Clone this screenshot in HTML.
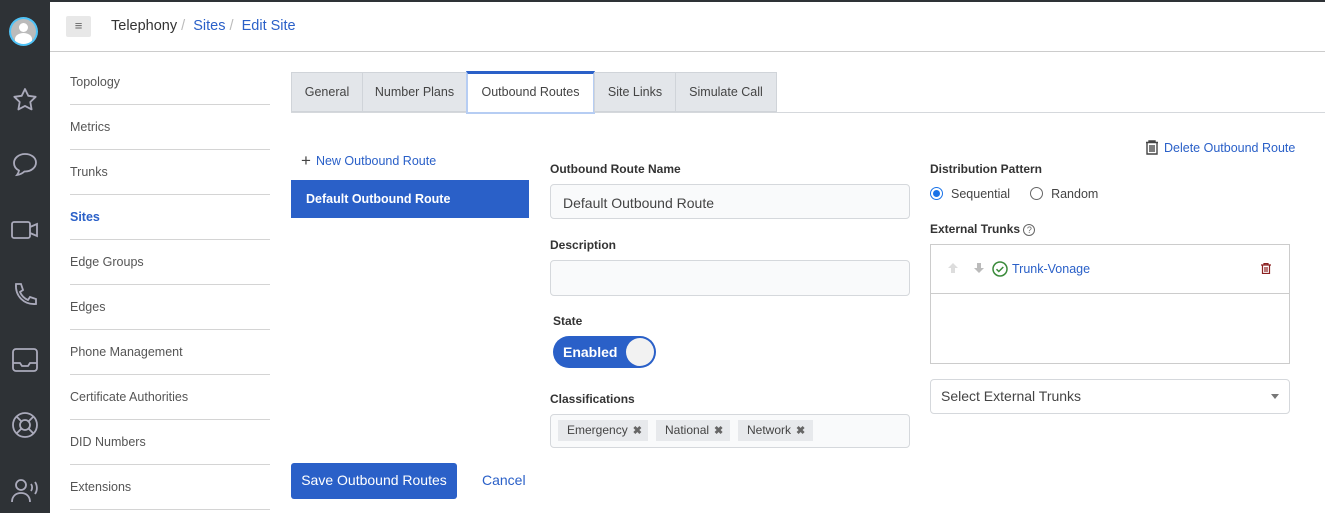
<!DOCTYPE html>
<html><head><meta charset="utf-8"><style>
*{box-sizing:border-box;margin:0;padding:0}
body{width:1325px;height:513px;overflow:hidden;background:#fff;font-family:"Liberation Sans",Arial,sans-serif;color:#333;position:relative}
.a{position:absolute}
.side{left:0;top:0;width:50px;height:513px;background:#2e3236}
.ico{position:absolute;left:10px;width:30px;height:30px}
.menu div{position:absolute;left:70px;width:200px;height:45px;border-bottom:1px solid #d4d4d4;font-size:12.5px;color:#555;padding-top:15px}
.tab{position:absolute;top:72px;height:40px;background:#e3e6ea;border:1px solid #d0d4d9;font-size:12.5px;color:#444;text-align:center;line-height:38px}
.lbl{font-size:12px;font-weight:bold;color:#333}
.inp{border:1px solid #d5d8dc;border-radius:4px;background:#f9fafb}
.tag{position:absolute;top:420px;height:21px;background:#e7e9ec;font-size:12px;color:#444;line-height:20px;padding-left:9px}
.tag b{color:#666;font-size:11px;margin-left:5px}
</style></head><body>
<div class="a" style="left:0;top:0;width:1325px;height:2px;background:#2e3236"></div>
<div class="a side">
<div class="a" style="left:9px;top:17px;width:29px;height:29px;border-radius:50%;background:#4fc3f7;padding:2px"><div style="width:25px;height:25px;border-radius:50%;background:#bbb;position:relative;overflow:hidden"><div style="position:absolute;left:8px;top:4px;width:9px;height:9px;border-radius:50%;background:#fff"></div><div style="position:absolute;left:4px;top:14px;width:17px;height:12px;border-radius:50% 50% 0 0;background:#fff"></div></div></div>
<svg class="ico" style="top:85px" viewBox="0 0 30 30" fill="none" stroke="#aab" stroke-width="1.8" stroke-linejoin="round"><path d="M15 4l3.3 6.8 7.4 1-5.4 5.2 1.3 7.4L15 20.9l-6.6 3.5 1.3-7.4-5.4-5.2 7.4-1z"/></svg>
<svg class="ico" style="top:150px" viewBox="0 0 30 30" fill="none" stroke="#aab" stroke-width="1.8"><path d="M15 4C8.9 4 4 8 4 13c0 3.2 2 6 5 7.5-.3 1.6-1 3.2-2 4.5 3-.4 5.6-1.8 7.4-3.5h.6c6.1 0 11-4 11-9S21.1 4 15 4z"/></svg>
<svg class="ico" style="top:215px" viewBox="0 0 30 30" fill="none" stroke="#aab" stroke-width="1.8"><rect x="2" y="7" width="18" height="16" rx="2"/><path d="M20 12l7-3v12l-7-3"/></svg>
<svg class="ico" style="top:280px" viewBox="0 0 30 30" fill="none" stroke="#aab" stroke-width="1.8"><path d="M6 4l5 0 2 6-3 2c1.5 3.5 4.5 6.5 8 8l2-3 6 2v5c-12 1-21-8-20-20z"/></svg>
<svg class="ico" style="top:345px" viewBox="0 0 30 30" fill="none" stroke="#aab" stroke-width="1.8"><rect x="3" y="4" width="24" height="22" rx="3"/><path d="M3 18h7l2 3h6l2-3h7"/></svg>
<svg class="ico" style="top:410px" viewBox="0 0 30 30" fill="none" stroke="#aab" stroke-width="1.8"><circle cx="15" cy="15" r="12"/><circle cx="15" cy="15" r="5"/><path d="M7 7l4.5 4.5M23 7l-4.5 4.5M7 23l4.5-4.5M23 23l-4.5-4.5"/></svg>
<svg class="ico" style="top:475px" viewBox="0 0 30 30" fill="none" stroke="#aab" stroke-width="1.8"><circle cx="11" cy="10" r="5"/><path d="M2 27c0-6 4-9 9-9s9 3 9 9M21 9c1.5 2 1.5 5 0 7M25 7c2.5 3.5 2.5 8.5 0 12"/></svg>
</div>
<div class="a" style="left:66px;top:16px;width:25px;height:21px;background:#e8e8e8;border-radius:2px;text-align:center;font-size:13px;line-height:20px;color:#666">≡</div>
<div class="a" style="left:111px;top:18px;font-size:14.5px;color:#333">Telephony <span style="color:#bbb">/</span>&nbsp; <span style="color:#2a60c8">Sites</span> <span style="color:#bbb">/</span>&nbsp; <span style="color:#2a60c8">Edit Site</span></div>
<div class="a" style="left:50px;top:51px;width:1275px;height:1px;background:#ccc"></div>
<div class="menu">
<div style="top:60px">Topology</div><div style="top:105px">Metrics</div><div style="top:150px">Trunks</div>
<div style="top:195px;color:#2a60c8;font-weight:bold">Sites</div><div style="top:240px">Edge Groups</div><div style="top:285px">Edges</div>
<div style="top:330px">Phone Management</div><div style="top:375px">Certificate Authorities</div><div style="top:420px">DID Numbers</div><div style="top:465px">Extensions</div>
</div>
<div class="a" style="left:291px;top:112px;width:1034px;height:1px;background:#d5d8dc"></div>
<div class="tab" style="left:291px;width:72px">General</div>
<div class="tab" style="left:362px;width:105px">Number Plans</div>
<div class="tab" style="left:466px;width:129px;top:71px;height:43px;background:#fff;border:2px solid #b6cdf3;border-top:3px solid #2a60c8;line-height:36px">Outbound Routes</div>
<div class="tab" style="left:594px;width:82px">Site Links</div>
<div class="tab" style="left:675px;width:102px">Simulate Call</div>
<div class="a" style="left:301px;top:150px;font-size:12.5px;color:#2a60c8"><span style="color:#444;font-size:17px;margin-right:5px;position:relative;top:1px">+</span>New Outbound Route</div>
<div class="a" style="left:291px;top:180px;width:238px;height:38px;background:#2a60c8;color:#fff;font-size:12.5px;font-weight:bold;padding:12px 15px">Default Outbound Route</div>
<div class="a lbl" style="left:550px;top:162px">Outbound Route Name</div>
<div class="a inp" style="left:550px;top:184px;width:360px;height:35px;padding:10px 12px;font-size:14px;color:#444">Default Outbound Route</div>
<div class="a lbl" style="left:550px;top:238px">Description</div>
<div class="a inp" style="left:550px;top:260px;width:360px;height:36px"></div>
<div class="a lbl" style="left:553px;top:314px">State</div>
<div class="a" style="left:553px;top:336px;width:103px;height:32px;border-radius:16px;background:#2a60c8;color:#fff;font-weight:bold;font-size:14px;padding:8px 10px">Enabled<div class="a" style="left:73px;top:2px;width:28px;height:28px;border-radius:50%;background:#f2f2f2"></div></div>
<div class="a lbl" style="left:550px;top:392px">Classifications</div>
<div class="a inp" style="left:550px;top:414px;width:360px;height:34px"></div>
<div class="tag" style="left:558px;width:90px">Emergency<b>✖</b></div>
<div class="tag" style="left:656px;width:74px">National<b>✖</b></div>
<div class="tag" style="left:738px;width:75px">Network<b>✖</b></div>
<div class="a" style="left:291px;top:463px;width:166px;height:36px;background:#2a60c8;border-radius:3px;color:#fff;font-size:14px;text-align:center;line-height:35px">Save Outbound Routes</div>
<div class="a" style="left:482px;top:472px;font-size:14px;color:#2a60c8">Cancel</div>
<div class="a" style="left:1145px;top:140px;font-size:12.5px;color:#2a60c8"><svg width="14" height="15" viewBox="0 0 14 15" style="vertical-align:-3px;margin-right:5px" fill="none" stroke="#444" stroke-width="1.4"><path d="M1 2.5h12M4 2.5V1h6v1.5M2 2.5v11.5h10V2.5M5 5v7M7 5v7M9 5v7"/></svg>Delete Outbound Route</div>
<div class="a lbl" style="left:930px;top:162px">Distribution Pattern</div>
<div class="a" style="left:930px;top:187px;font-size:12.5px;color:#444"><span style="display:inline-block;width:13px;height:13px;border-radius:50%;border:1px solid #1a73e8;vertical-align:-2px;margin-right:8px;position:relative"><span style="position:absolute;left:2px;top:2px;width:7px;height:7px;border-radius:50%;background:#1a73e8"></span></span>Sequential<span style="display:inline-block;width:13px;height:13px;border-radius:50%;border:1px solid #666;vertical-align:-2px;margin:0 8px 0 20px"></span>Random</div>
<div class="a lbl" style="left:930px;top:222px">External Trunks <span style="display:inline-block;width:12px;height:12px;border:1px solid #666;border-radius:50%;font-size:9px;text-align:center;line-height:10px;color:#666;font-weight:normal">?</span></div>
<div class="a" style="left:930px;top:244px;width:360px;height:120px;border:1px solid #ccc"></div>
<div class="a" style="left:931px;top:293px;width:358px;height:1px;background:#ccc"></div>
<svg class="a" style="left:947px;top:262px" width="12" height="12" viewBox="0 0 12 12" fill="#ddd"><path d="M6 1l5 5H8v5H4V6H1z"/></svg>
<svg class="a" style="left:973px;top:262px" width="12" height="12" viewBox="0 0 12 12" fill="#bbb"><path d="M6 11l5-5H8V1H4v5H1z"/></svg>
<svg class="a" style="left:992px;top:261px" width="16" height="16" viewBox="0 0 16 16" fill="none" stroke="#3a8a3a" stroke-width="1.5"><circle cx="8" cy="8" r="7"/><path d="M4.5 8.2l2.3 2.3 4.5-4.5"/></svg>
<div class="a" style="left:1012px;top:262px;font-size:12.5px;color:#2a60c8">Trunk-Vonage</div>
<svg class="a" style="left:1261px;top:263px" width="10" height="11" viewBox="0 0 10 11" fill="none" stroke="#8b2020" stroke-width="1.2"><path d="M0 2h10M3 2V.6h4V2M1.5 2v8.5h7V2M4 4v5M6 4v5"/></svg>
<div class="a inp" style="left:930px;top:379px;width:360px;height:35px;background:#fff;padding:8px 10px;font-size:14px;color:#444">Select External Trunks<span style="position:absolute;right:10px;top:14px;border:4px solid transparent;border-top:5px solid #777"></span></div>
</body></html>
